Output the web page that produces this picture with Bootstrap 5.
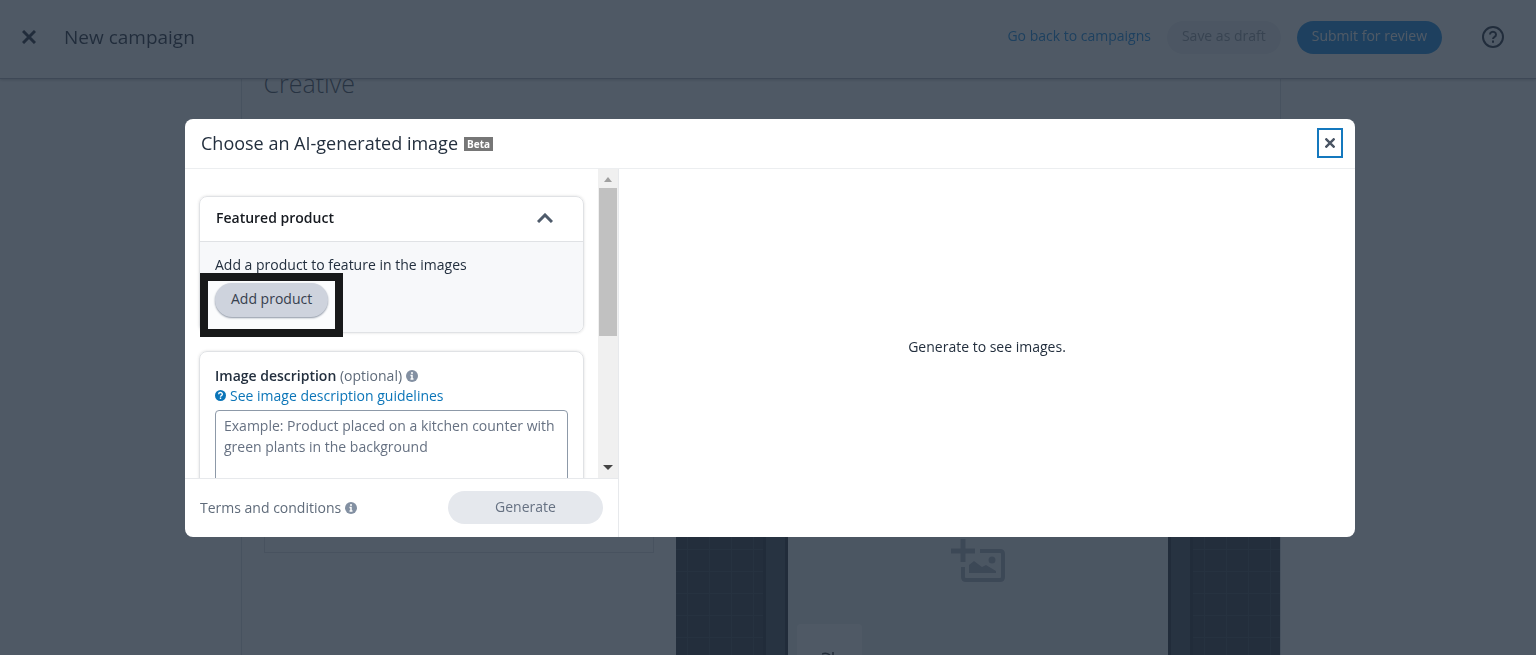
<!DOCTYPE html>
<html lang="en">
<head>
<meta charset="utf-8">
<meta name="viewport" content="width=device-width, initial-scale=1">
<title>New campaign</title>
<link href="https://cdn.jsdelivr.net/npm/bootstrap@5.3.0/dist/css/bootstrap.min.css" rel="stylesheet">
<style>
  body { font-family: "Open Sans", "Noto Sans", sans-serif; font-size: 14px; line-height: 20px; color: #232f3e; background: #fff; }
  svg { display: block; flex: none; }
  .app-bar { min-height: 79px; padding: 0 32px 4px 22px; background: #fff; border-bottom: 1px solid #a8acb4; box-shadow: 0 1px 3px #0004; }
  .bar-title { font-size: 19px; line-height: 24px; color: #1a2230; }
  .bar-link { color: #0a84e0; text-decoration: none; padding-bottom: 2px; }
  .pill { border: 0; border-radius: 17px; height: 33px; padding: 0 16px 2px; font-size: 14px; line-height: 20px; }
  .app-bar .pill { padding: 0 15px 2px; }
  .pill-draft, .pill-draft:disabled { background: #edeff2; color: #8a929c; opacity: 1; }
  .pill-submit { background: #0a84e0; color: #fff; }
  .page { padding: 66px 15px 0 0; }
  .section-card { width: 1040px; max-width: 100%; border: 1px solid #d5d9de; border-width: 0 1px; padding-left: 22px; }
  .section-title { font-size: 25px; line-height: 34px; font-weight: 300; color: #3a434f; }
  .section-row { gap: 22px; }
  .form-panel { flex: 0 1 390px; height: calc(100vh - 226px); border: 1px solid #dadde1; }
  .preview { flex: 1 1 0; background: #232b36; }
  .preview-grid { flex: 1 1 0; background-color: #242b35;
    background-image: linear-gradient(#353d48 1px, transparent 1px), linear-gradient(90deg, #353d48 1px, transparent 1px);
    background-size: 22px 22px; background-position: 11px 7px; }
  .bezel { flex: 0 0 25px; background: #3a424c; border: 0 solid #1a222c; border-width: 0 3px; }
  .device { flex: 0 1 380px; gap: 42px; background: #eceff1; color: #a0a8b2; }
  .chip { width: 65px; height: 31px; margin-left: 9px; background: #fff; border-radius: 4px 4px 0 0; }
  .modal-backdrop { --bs-backdrop-bg: #232f3e; --bs-backdrop-opacity: .8; }
  .modal { padding-left: 4px; }
  .ai-dialog { max-width: 1170px; }
  .modal-content { border: 0; border-radius: 8px; overflow: hidden; }
  .modal-header { height: 50px; padding: 0 12px 0 16px; border-color: #eceef0; border-radius: 0; }
  .modal-title { font-size: 18px; line-height: 24px; font-weight: 400; }
  .title-row { gap: 6px; }
  .beta-tag { margin-top: 2px; background: #767676; color: #fff; font-size: 10px; line-height: 14px; font-weight: 700; padding: 0 3px; }
  .close-btn { width: 26px; height: 30px; border: 2px solid #1478be; background: #fff; color: #4a5564; }
  .side { flex: 0 0 434px; border-right: 1px solid #e7e9ec; }
  .scroll-view { height: calc(100vh - 346px); overflow: hidden; padding: 27px 14px 0 14px; }
  .scroll-rail { flex: 0 0 20px; background: #f0f0f0; padding: 8px 1px; }
  .scroll-thumb { height: 148px; margin-top: 6px; background: #c1c1c1; }
  .panel { border: 1px solid #e0e2e5; border-radius: 8px; box-shadow: 0 0 3px #0002; }
  .panel-toggle { width: 100%; height: 44px; padding: 0 30px 2px 16px; border: 0; background: none; font-weight: 600; color: #161a20; }
  .panel-body { height: 91px; padding: 13px 15px; background: #f7f8fa; border-top: 1px solid #e0e2e5; border-radius: 0 0 8px 8px; }
  .focus-frame { position: absolute; inset: -10px -15px -20px -15px; border: 8px solid #18191a; background: #fbfcfd; }
  .pill-add { position: relative; height: 34px; background: #ced3dd; color: #37404e; box-shadow: 0 1px 2px #8b94a2; }
  .panel-form { margin-top: 18px; padding: 14px 15px 0; }
  .muted { color: #5f6b7a; }
  .info { color: #8390a2; }
  .guide-link { color: #0b75b8; text-decoration: none; }
  .describe { height: 120px; padding: 4px 8px; border: 1px solid #8d99a8; border-radius: 4px; font-size: 14px; line-height: 21px; resize: none; }
  .describe::placeholder { color: #667182; }
  .side-foot { height: 59px; padding: 0 15px; border-top: 1px solid #e7e9ec; }
  .pill-generate, .pill-generate:disabled { width: 155px; background: #e5e8ed; color: #667182; opacity: 1; }
  .empty-note { padding-bottom: 12px; }
</style>
</head>
<body class="vh-100 overflow-hidden">

<header class="app-bar fixed-top d-flex align-items-center">
  <button type="button" class="btn p-0 border-0" aria-label="Close campaign">
    <svg width="14" height="14" viewBox="0 0 14 14" fill="none" stroke="#1a2230" stroke-width="3"><path d="M1 1l12 12M13 1L1 13"/></svg>
  </button>
  <h1 class="bar-title fw-normal mb-0 ms-4 ps-1">New campaign</h1>
  <div class="d-flex align-items-center ms-auto">
    <a class="bar-link" href="#">Go back to campaigns</a>
    <button type="button" class="pill pill-draft mx-3" disabled>Save as draft</button>
    <button type="button" class="pill pill-submit">Submit for review</button>
    <a href="#" class="ms-4 ps-3" aria-label="Help">
      <svg width="22" height="22" viewBox="0 0 22 22" fill="none" stroke="#1a2230" stroke-width="2"><circle cx="11" cy="11" r="10"/><path d="M8 8.500a3 2.700 0 1 1 4.600 2.300C11.500 11.500 11 12 11 13M11 14.600v2.200"/></svg>
    </a>
  </div>
</header>

<main class="page vh-100 d-flex">
  <section class="section-card mx-auto d-flex flex-column">
    <h2 class="section-title mb-4">Creative</h2>
    <div class="section-row d-flex flex-fill align-items-start">
      <div class="form-panel"></div>
      <div class="preview d-flex align-self-stretch">
        <div class="preview-grid"></div>
        <div class="bezel"></div>
        <div class="device d-flex flex-column justify-content-end">
          <svg class="align-self-center" width="54" height="43" viewBox="0 0 54 43" fill="none" stroke="currentColor" stroke-width="4"><path d="M12 0v23M0 12h24" stroke-width="5"/><path d="M29 12h20q3 0 3 3v23q0 3-3 3H15q-3 0-3-3V28"/><path d="M18 33v-7l5-4 8 6 4-2 10 6v2H18z" fill="currentColor" stroke="none"/><circle cx="41" cy="21" r="3.500" fill="currentColor" stroke="none"/></svg>
          <div class="chip d-flex justify-content-center align-items-end">
            <svg width="14" height="3" viewBox="0 0 14 3" fill="none" stroke="#222" stroke-width="1.500"><path d="M0 2q4-2 8 1M11 0v3"/></svg>
          </div>
        </div>
        <div class="bezel"></div>
        <div class="preview-grid"></div>
      </div>
    </div>
  </section>
</main>

<div class="modal-backdrop show"></div>
<div class="modal d-block" role="dialog" aria-modal="true" aria-labelledby="dialogTitle">
  <div class="modal-dialog modal-dialog-centered ai-dialog">
    <div class="modal-content">
      <div class="modal-header">
        <div class="title-row d-flex align-items-center">
          <h2 class="modal-title" id="dialogTitle">Choose an AI-generated image</h2>
          <span class="beta-tag">Beta</span>
        </div>
        <button type="button" class="close-btn d-flex align-items-center justify-content-center p-0" aria-label="Close">
          <svg width="10" height="10" viewBox="0 0 10 10" fill="none" stroke="currentColor" stroke-width="2.400"><path d="M.5.5l9 9M9.500.5l-9 9"/></svg>
        </button>
      </div>
      <div class="d-flex">
        <div class="side">
          <div class="d-flex">
            <div class="scroll-view flex-fill">
              <section class="panel">
                <button type="button" class="panel-toggle d-flex align-items-center justify-content-between" aria-expanded="true">
                  Featured product
                  <svg width="16" height="10" viewBox="0 0 16 10" fill="none" stroke="#4f5b6b" stroke-width="3"><path d="M1 9l7-7 7 7"/></svg>
                </button>
                <div class="panel-body">
                  <p class="mb-2">Add a product to feature in the images</p>
                  <div class="position-relative d-inline-block">
                    <div class="focus-frame"></div>
                    <button type="button" class="pill pill-add">Add product</button>
                  </div>
                </div>
              </section>
              <section class="panel panel-form">
                <div class="d-flex align-items-center gap-1">
                  <label for="describe"><strong class="fw-semibold">Image description</strong> <span class="muted">(optional)</span></label>
                  <svg class="info" width="12" height="12" viewBox="0 0 12 12"><circle cx="6" cy="6" r="6" fill="currentColor"/><path d="M6 2v2M4.500 5.500H6V9M4.500 9h3" fill="none" stroke="#fff" stroke-width="1.500"/></svg>
                </div>
                <a class="guide-link d-flex align-items-center gap-1" href="#">
                  <svg width="11" height="11" viewBox="0 0 12 12"><circle cx="6" cy="6" r="6" fill="currentColor"/><path d="M4 4.600a2 1.800 0 1 1 3 1.500Q6 6.600 6 7.300M6 8.300v1.500" fill="none" stroke="#fff" stroke-width="1.500"/></svg>
                  See image description guidelines
                </a>
                <textarea id="describe" class="describe form-control mt-1" placeholder="Example: Product placed on a kitchen counter with green plants in the background"></textarea>
              </section>
            </div>
            <div class="scroll-rail d-flex flex-column" aria-hidden="true">
              <svg class="align-self-center" width="8" height="5" viewBox="0 0 8 5"><path d="M4 0l4 5H0z" fill="#a0a0a0"/></svg>
              <div class="scroll-thumb"></div>
              <svg class="align-self-center mt-auto" width="10" height="5" viewBox="0 0 10 5"><path d="M0 0h10L5 5z" fill="#444"/></svg>
            </div>
          </div>
          <div class="side-foot d-flex align-items-center">
            <span class="muted">Terms and conditions</span>
            <svg class="info ms-1" width="12" height="12" viewBox="0 0 12 12"><circle cx="6" cy="6" r="6" fill="currentColor"/><path d="M6 2v2M4.500 5.500H6V9M4.500 9h3" fill="none" stroke="#fff" stroke-width="1.500"/></svg>
            <button type="button" class="pill pill-generate ms-auto" disabled>Generate</button>
          </div>
        </div>
        <div class="empty-note flex-fill d-flex align-items-center justify-content-center">
          <p class="mb-0">Generate to see images.</p>
        </div>
      </div>
    </div>
  </div>
</div>
<script src="https://cdn.jsdelivr.net/npm/bootstrap@5.3.0/dist/js/bootstrap.bundle.min.js"></script>
</body>
</html>
